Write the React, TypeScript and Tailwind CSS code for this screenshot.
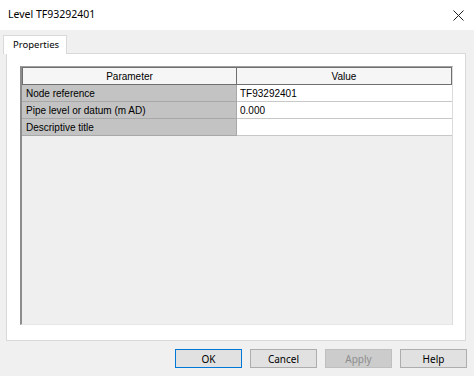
const rows: [string, string][] = [
  ['Node reference', 'TF93292401'],
  ['Pipe level or datum (m AD)', '0.000'],
  ['Descriptive title', ''],
];

const ui = { fontFamily: '"Segoe UI", "Noto Sans", "Open Sans", sans-serif' };
const grid = { fontFamily: '"Liberation Sans", Arial, sans-serif' };

function Button({ label, primary, disabled }: { label: string; primary?: boolean; disabled?: boolean }) {
  let cls = 'border-[#adadad] bg-[#e1e1e1] text-black';
  if (primary) cls = 'border-[#0078d7] bg-[#e1e1e1] text-black';
  if (disabled) cls = 'border-[#bfbfbf] bg-[#cccccc] text-[#8d8d8d]';
  return (
    <div
      className={`flex h-[19px] w-[67px] items-center justify-center border text-[10px] leading-none ${cls}`}
      style={ui}
    >
      {label}
    </div>
  );
}

export default function App() {
  return (
    <div className="flex h-[376px] w-[474px] flex-col bg-[#f0f0f0] text-black">
      <div className="flex h-[30px] items-center justify-between bg-white pl-[8px] pr-[10px]">
        <span className="text-[10.5px]" style={ui}>Level TF93292401</span>
        <svg width="11" height="11" viewBox="0 0 11 11" className="mt-[1px]">
          <path d="M0.5 0.5 L10.5 10.5 M10.5 0.5 L0.5 10.5" stroke="#222" strokeWidth="1" />
        </svg>
      </div>

      <div className="flex pl-[3px] pt-[5px]">
        <div
          className="relative z-10 flex h-[19px] w-[64px] items-center border border-b-0 border-[#d9d9d9] bg-white pl-[9px] text-[9.5px]"
          style={ui}
        >
          Properties
        </div>
      </div>

      <div className="-mt-px ml-[6px] flex h-[288px] w-[460px] flex-col border border-[#d9d9d9] bg-white pl-[13px] pt-[12px]">
        <div
          className="flex h-[259px] w-[433px] flex-col border-l-2 border-t border-r border-b border-l-[#8c8c8c] border-t-[#a0a0a0] border-r-[#dcdcdc] border-b-[#e6e6e6] bg-[#efefef] text-[10px]"
          style={grid}
        >
          <div className="flex h-[18px]">
            <div className="flex w-[215px] items-center justify-center border border-[#6f6f6f] bg-[#f6f6f6]">Parameter</div>
            <div className="-ml-px flex flex-1 items-center justify-center border border-[#6f6f6f] bg-[#f6f6f6]">Value</div>
          </div>
          {rows.map(([p, v]) => (
            <div key={p} className="flex h-[17px]">
              <div className="flex w-[215px] items-center border-b border-r border-[#a8a8a8] bg-[#c3c3c3] pl-[4px]">{p}</div>
              <div className="flex flex-1 items-center border-b border-[#c8c8c8] bg-white pl-[3px]">{v}</div>
            </div>
          ))}
        </div>
      </div>

      <div className="mt-[8px] flex justify-end gap-[8px] pr-[7px]">
        <Button label="OK" primary />
        <Button label="Cancel" />
        <Button label="Apply" disabled />
        <Button label="Help" />
      </div>
    </div>
  );
}
